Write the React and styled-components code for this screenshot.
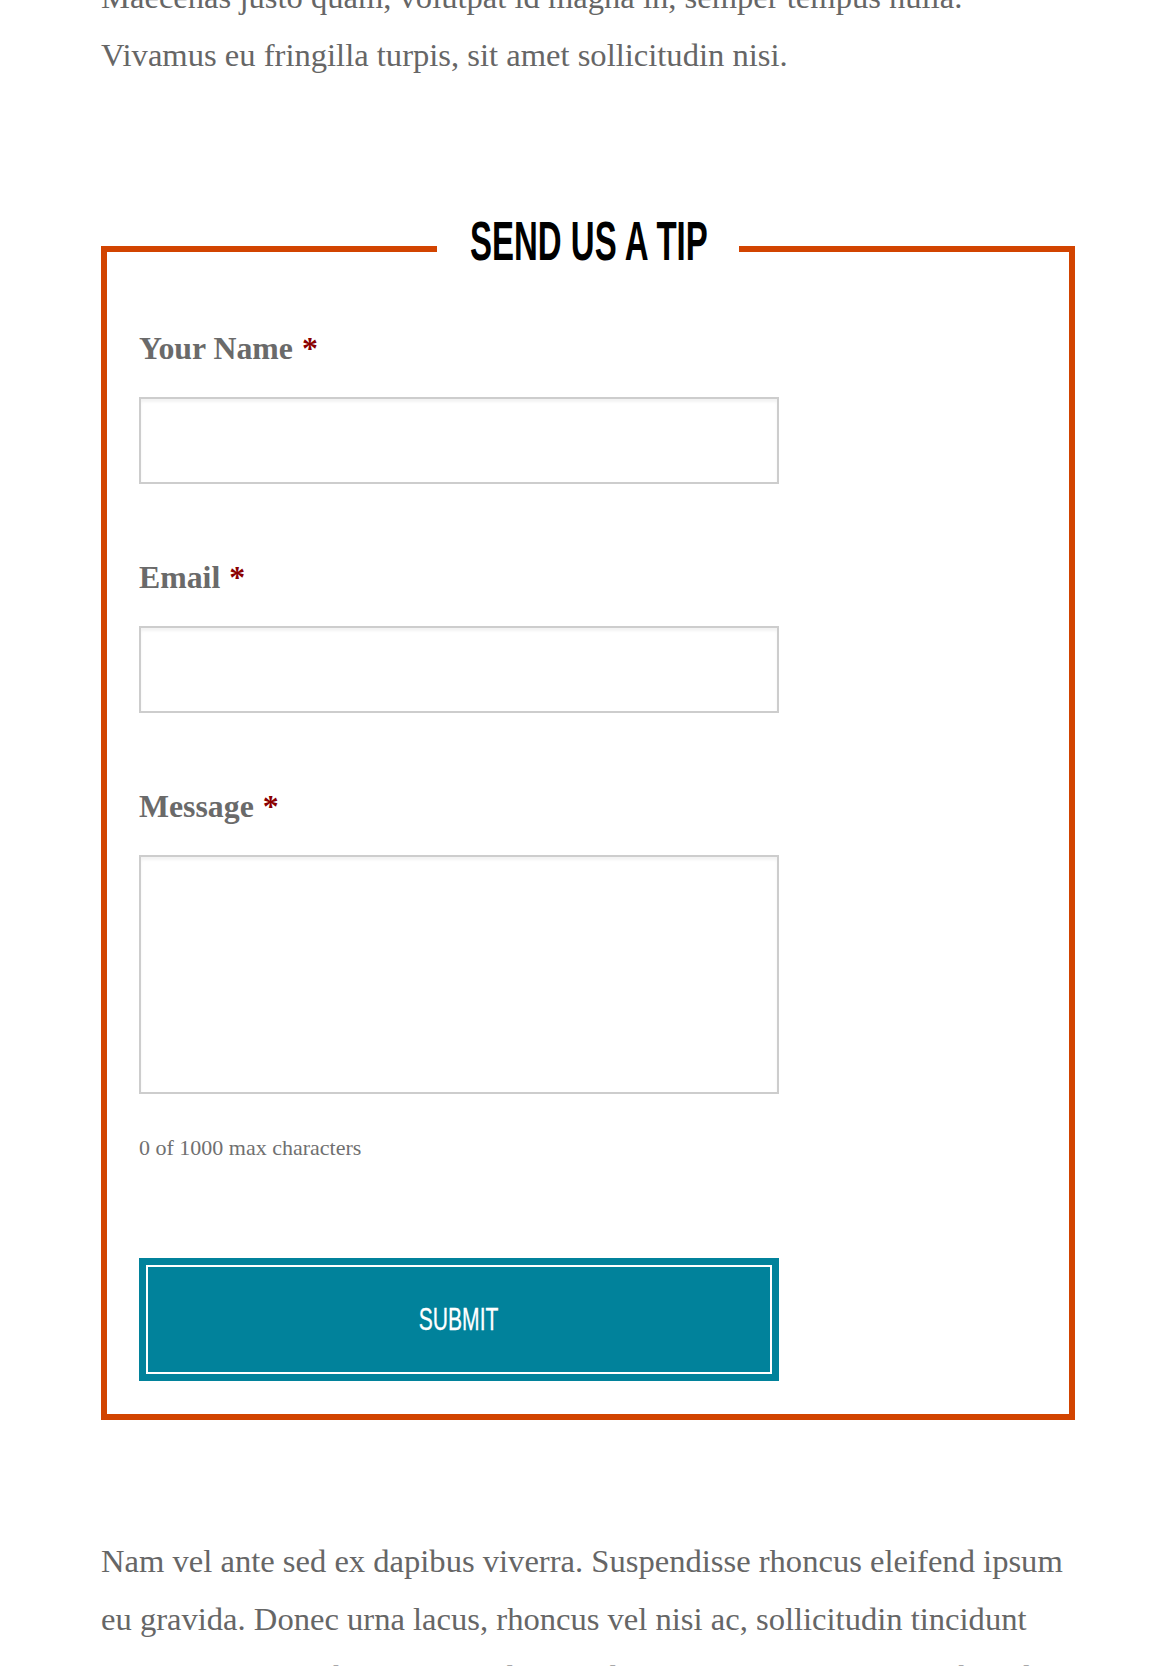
import styled, { createGlobalStyle } from 'styled-components';

const GlobalStyle = createGlobalStyle`
  html, body {
    margin: 0;
    padding: 0;
    background: #fff;
  }
  body {
    font-family: "Liberation Serif", "Times New Roman", serif;
    color: #666;
    overflow: hidden;
  }
`;

const Page = styled.main`
  max-width: 974px;
  margin: 0 auto;
`;

const Paragraph = styled.p`
  margin: ${(props) => props.$margin || '0'};
  font-size: 32.6px;
  line-height: 58px;
  color: #666;
`;

const TipBox = styled.fieldset`
  margin: 127px 0 0;
  padding: 44px 32px 33px;
  border: 6px solid #d24400;
  min-inline-size: 0;
`;

const Title = styled.legend`
  margin: 0 auto;
  padding: 0 33px 16px;
  font-family: "Liberation Sans", Arial, sans-serif;
  font-weight: 700;
  font-size: 55px;
  line-height: 60px;
  color: #000;
`;

const Condensed = styled.span`
  display: inline-block;
  width: ${(props) => props.$width}px;
  white-space: nowrap;
  vertical-align: top;

  span {
    display: inline-block;
    transform: scaleX(${(props) => props.$scale});
    transform-origin: left center;
    letter-spacing: ${(props) => props.$spacing || 0}px;
  }
`;

const Field = styled.div`
  display: flex;
  flex-direction: column;
  align-items: flex-start;
  margin-bottom: ${(props) => props.$gap ?? 76}px;
`;

const Label = styled.label`
  font-size: 31.8px;
  line-height: 36px;
  font-weight: 700;
  color: #6a6a6a;
  margin-bottom: 30px;
`;

const Required = styled.span`
  color: #8b0000;
  margin-left: 9px;
`;

const Input = styled.input`
  box-sizing: border-box;
  width: 640px;
  height: 87px;
  border: 2px solid #cdcdcd;
  box-shadow: inset 0 3px 3px rgba(0, 0, 0, 0.05);
  background: #fff;
  font: inherit;
  font-size: 22px;
  padding: 0 14px;
  outline: none;
`;

const TextArea = styled.textarea`
  box-sizing: border-box;
  width: 640px;
  height: 239px;
  border: 2px solid #cdcdcd;
  box-shadow: inset 0 3px 3px rgba(0, 0, 0, 0.05);
  background: #fff;
  font: inherit;
  font-size: 22px;
  padding: 12px 14px;
  resize: none;
  outline: none;
  display: block;
`;

const Counter = styled.div`
  margin-top: 42px;
  font-size: 22px;
  line-height: 24px;
  color: #707070;
`;

const Submit = styled.button`
  display: flex;
  align-items: center;
  justify-content: center;
  width: 640px;
  height: 123px;
  margin-top: 98px;
  border: none;
  background: #01829b;
  box-shadow: inset 0 0 0 7px #01829b, inset 0 0 0 9px #fff;
  color: #fff;
  font-family: "Liberation Sans", Arial, sans-serif;
  font-size: 31px;
  cursor: pointer;

  span {
    display: inline-block;
    transform: scaleX(0.68);
    -webkit-text-stroke: 0.3px #fff;
  }
`;

const fields = [
  { id: 'name', label: 'Your Name' },
  { id: 'email', label: 'Email' },
];

function App() {
  return (
    <>
      <GlobalStyle />
      <Page>
        <Paragraph $margin="-32px 0 0">
          Maecenas justo quam, volutpat id magna in, semper tempus nulla.
          Vivamus eu fringilla turpis, sit amet sollicitudin nisi.
        </Paragraph>

        <TipBox>
          <Title>
            <Condensed $width={236} $scale={0.6}>
              <span>SEND US A TIP</span>
            </Condensed>
          </Title>

          {fields.map((f) => (
            <Field key={f.id}>
              <Label htmlFor={f.id}>
                {f.label}
                <Required>*</Required>
              </Label>
              <Input id={f.id} type={f.id === 'email' ? 'email' : 'text'} />
            </Field>
          ))}

          <Field $gap={0}>
            <Label htmlFor="message">
              Message
              <Required>*</Required>
            </Label>
            <TextArea id="message" maxLength={1000} />
          </Field>
          <Counter>0 of 1000 max characters</Counter>

          <Submit type="button">
            <span>SUBMIT</span>
          </Submit>
        </TipBox>

        <Paragraph $margin="112px 0 0">
          Nam vel ante sed ex dapibus viverra. Suspendisse rhoncus eleifend
          ipsum eu gravida. Donec urna lacus, rhoncus vel nisi ac, sollicitudin
          tincidunt quam. Praesent lobortis nulla id tellus dignissim, at
          tempor ligula blandit.
        </Paragraph>
      </Page>
    </>
  );
}

export default App;
